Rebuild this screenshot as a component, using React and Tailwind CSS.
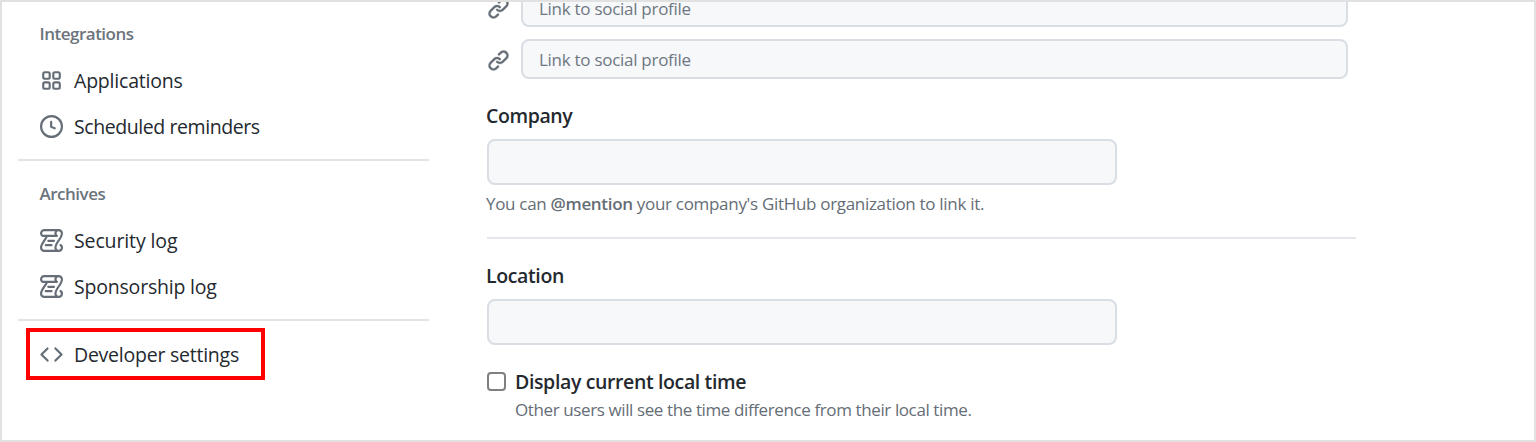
const icons = {
  apps: 'M1.5 3.25c0-.966.784-1.75 1.75-1.75h2.5c.966 0 1.75.784 1.75 1.75v2.5A1.75 1.75 0 0 1 5.75 7.5h-2.5A1.75 1.75 0 0 1 1.5 5.75Zm7 0c0-.966.784-1.75 1.75-1.75h2.5c.966 0 1.75.784 1.75 1.75v2.5a1.75 1.75 0 0 1-1.75 1.75h-2.5A1.75 1.75 0 0 1 8.5 5.75Zm-7 7c0-.966.784-1.75 1.75-1.75h2.5c.966 0 1.75.784 1.75 1.75v2.5a1.75 1.75 0 0 1-1.75 1.75h-2.5a1.75 1.75 0 0 1-1.75-1.75Zm7 0c0-.966.784-1.75 1.75-1.75h2.5c.966 0 1.75.784 1.75 1.75v2.5a1.75 1.75 0 0 1-1.75 1.75h-2.5a1.75 1.75 0 0 1-1.75-1.75ZM3.25 3a.25.25 0 0 0-.25.25v2.5c0 .138.112.25.25.25h2.5A.25.25 0 0 0 6 5.75v-2.5A.25.25 0 0 0 5.75 3Zm7 0a.25.25 0 0 0-.25.25v2.5c0 .138.112.25.25.25h2.5a.25.25 0 0 0 .25-.25v-2.5a.25.25 0 0 0-.25-.25Zm-7 7a.25.25 0 0 0-.25.25v2.5c0 .138.112.25.25.25h2.5a.25.25 0 0 0 .25-.25v-2.5a.25.25 0 0 0-.25-.25Zm7 0a.25.25 0 0 0-.25.25v2.5c0 .138.112.25.25.25h2.5a.25.25 0 0 0 .25-.25v-2.5a.25.25 0 0 0-.25-.25Z',
  clock: 'M8 0a8 8 0 1 1 0 16A8 8 0 0 1 8 0ZM1.5 8a6.5 6.5 0 1 0 13 0 6.5 6.5 0 0 0-13 0Zm7-3.25v2.992l2.028.812a.75.75 0 0 1-.557 1.392l-2.5-1A.751.751 0 0 1 7 8.25v-3.5a.75.75 0 0 1 1.5 0Z',
  log: 'M5 8.25a.75.75 0 0 1 .75-.75h4a.75.75 0 0 1 0 1.5h-4A.75.75 0 0 1 5 8.25ZM4 10.5A.75.75 0 0 0 4 12h4a.75.75 0 0 0 0-1.5H4ZM13-.005c1.654 0 3 1.328 3 3 0 .982-.338 1.933-.783 2.818-.443.879-1.028 1.758-1.582 2.588l-.011.017c-.568.853-1.104 1.659-1.501 2.446-.398.789-.623 1.494-.623 2.136a1.5 1.5 0 1 0 2.333-1.248.75.75 0 0 1 .834-1.246A3 3 0 0 1 13 16H3a3 3 0 0 1-3-3c0-1.582.891-3.135 1.777-4.506.209-.322.418-.637.623-.946.473-.709.923-1.386 1.287-2.048H2.51c-.576 0-1.381-.133-1.907-.783A2.68 2.68 0 0 1 0 2.995a3 3 0 0 1 3-3Zm0 1.5a1.5 1.5 0 0 0-1.5 1.5c0 .476.223.834.667 1.132A.75.75 0 0 1 11.75 5.5H5.368c-.467 1.003-1.141 2.015-1.773 2.963-.192.289-.381.571-.558.845C2.13 10.711 1.5 11.916 1.5 13A1.5 1.5 0 0 0 3 14.5h7.401A2.989 2.989 0 0 1 10 13c0-.979.338-1.928.784-2.812.441-.874 1.023-1.748 1.575-2.576l.017-.026c.568-.853 1.103-1.658 1.501-2.448.398-.79.623-1.497.623-2.143 0-.838-.669-1.5-1.5-1.5Zm-10 0a1.5 1.5 0 0 0-1.5 1.5c0 .321.1.569.27.778.097.12.325.227.74.227h7.674A2.737 2.737 0 0 1 10 2.995c0-.546.146-1.059.401-1.5Z',
  code: 'm11.28 3.22 4.25 4.25a.75.75 0 0 1 0 1.06l-4.25 4.25a.749.749 0 0 1-1.275-.326.749.749 0 0 1 .215-.734L13.94 8l-3.72-3.72a.749.749 0 0 1 .326-1.275.749.749 0 0 1 .734.215Zm-6.56 0a.751.751 0 0 1 1.042.018.751.751 0 0 1 .018 1.042L2.06 8l3.72 3.72a.749.749 0 0 1-.326 1.275.749.749 0 0 1-.734-.215L.47 8.53a.75.75 0 0 1 0-1.06Z',
  link: 'm7.775 3.275 1.25-1.25a3.5 3.5 0 1 1 4.95 4.95l-2.5 2.5a3.5 3.5 0 0 1-4.95 0 .751.751 0 0 1 .018-1.042.751.751 0 0 1 1.042-.018 1.998 1.998 0 0 0 2.83 0l2.5-2.5a2.002 2.002 0 0 0-2.83-2.83l-1.25 1.25a.751.751 0 0 1-1.042-.018.751.751 0 0 1-.018-1.042Zm-4.69 9.64a1.998 1.998 0 0 0 2.83 0l1.25-1.25a.751.751 0 0 1 1.042.018.751.751 0 0 1 .018 1.042l-1.25 1.25a3.5 3.5 0 1 1-4.95-4.95l2.5-2.5a3.5 3.5 0 0 1 4.95 0 .751.751 0 0 1-.018 1.042.751.751 0 0 1-1.042.018 1.998 1.998 0 0 0-2.83 0l-2.5 2.5a1.998 1.998 0 0 0 0 2.83Z',
}

function Icon({ name, className = '' }) {
  return (
    <svg className={`w-[23px] h-[23px] shrink-0 overflow-visible text-[#656d76] ${className}`} viewBox="0 0 16 16" fill="currentColor">
      <path d={icons[name]} />
    </svg>
  )
}

function NavItem({ icon, tracking = 'tracking-[-0.2px]', children }) {
  return (
    <a href="#" className={`flex items-center h-[46px] pl-[22px] gap-[11px] text-[19.5px] ${tracking}`}>
      <Icon name={icon} />
      <span className="pt-px whitespace-nowrap">{children}</span>
    </a>
  )
}

function NavHeading({ children }) {
  return <h3 className="flex items-center h-[46px] pl-[21.5px] text-[17px] font-semibold tracking-[-0.5px] text-[#6b747d]">{children}</h3>
}

function SocialInput({ padding = 'pt-px' }) {
  return (
    <div className="flex items-center gap-[11px]">
      <Icon name="link" className="mt-[2px] stroke-current stroke-[0.2]" />
      <input
        placeholder="Link to social profile"
        className={`w-[827px] h-10 px-4 ${padding} text-[17px] tracking-[-0.28px] bg-[#f6f8fa] border-2 border-[#d8dee4] rounded-lg placeholder:text-[#6e7781] placeholder:opacity-100`}
      />
    </div>
  )
}

function App() {
  return (
    <div className="w-[1536px] h-[442px] flex overflow-hidden bg-white border-2 border-[#e1e1e1] font-['Open_Sans','Noto_Sans',sans-serif] text-[#24292f]">
      {/* Settings menu */}
      <nav className="w-[411px] ml-4 pt-[9px] shrink-0">
        <NavHeading>Integrations</NavHeading>
        <NavItem icon="apps">Applications</NavItem>
        <NavItem icon="clock" tracking="tracking-[-0.42px]">Scheduled reminders</NavItem>
        <hr className="mt-[10px] mb-[10px] border-t-2 border-[#e1e5ea]" />
        <NavHeading>Archives</NavHeading>
        <NavItem icon="log" tracking="tracking-[-0.12px]">Security log</NavItem>
        <NavItem icon="log">Sponsorship log</NavItem>
        <hr className="mt-[10px] mb-[7px] border-t-2 border-[#e1e5ea]" />
        <a href="#" className="ml-2 flex items-center w-[239px] h-[52px] pl-[10px] gap-[11px] border-4 border-[#ff0000] text-[19.5px] tracking-[-0.24px]">
          <Icon name="code" />
          <span className="pt-px whitespace-nowrap">Developer settings</span>
        </a>
      </nav>

      {/* Profile form */}
      <main className="w-[869px] ml-[58px] shrink-0">
        <div className="-mt-[15px] flex flex-col gap-3">
          <SocialInput padding="pt-[3px]" />
          <SocialInput />
        </div>

        <label className="block mt-[23px] -ml-px h-[28px] leading-[28px] text-[19.5px] font-semibold tracking-[-0.4px]">Company</label>
        <input className="block mt-[9px] w-[630px] h-[46px] bg-[#f6f8fa] border-2 border-[#d8dee4] rounded-lg" />
        <p className="mt-[7px] -ml-px h-6 leading-6 text-[17px] tracking-[-0.31px] text-[#656d76] whitespace-nowrap">
          You can <strong className="font-semibold">@mention</strong> your company's GitHub organization to link it.
        </p>
        <hr className="mt-[21px] border-t-2 border-[#e4e8ec]" />

        <label className="block mt-[23px] -ml-px h-[28px] leading-[28px] text-[19.5px] font-semibold tracking-[-0.37px]">Location</label>
        <input className="block mt-[9px] w-[630px] h-[46px] bg-[#f6f8fa] border-2 border-[#d8dee4] rounded-lg" />

        <div className="flex mt-[23px] gap-[9px]">
          <input type="checkbox" className="appearance-none w-[19px] h-[19px] mt-[4px] border-2 border-[#808080] rounded-[4px] bg-white" />
          <div>
            <label className="block h-[28px] leading-[28px] text-[19.5px] font-semibold tracking-[-0.37px]">Display current local time</label>
            <p className="mt-[2px] h-6 leading-6 text-[17px] tracking-[-0.39px] text-[#656d76] whitespace-nowrap">Other users will see the time difference from their local time.</p>
          </div>
        </div>
      </main>
    </div>
  )
}

export default App
